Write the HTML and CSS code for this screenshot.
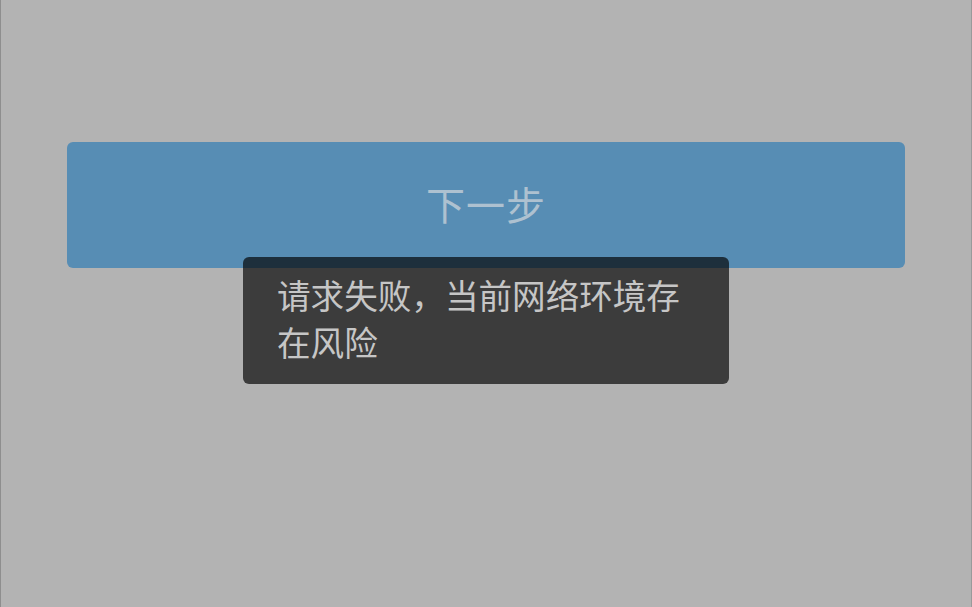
FILE: index.html
```html
<!DOCTYPE html>
<html lang="zh-CN">
<head>
<meta charset="utf-8">
<title>下一步</title>
<link rel="stylesheet" href="styles.css">
</head>
<body>
<div class="screen">
  <button class="next-btn" type="button">下一步</button>
  <div class="toast">请求失败，当前网络环境存在风险</div>
</div>
</body>
</html>
```
FILE: styles.css
```css
html, body {
  margin: 0;
  padding: 0;
  background: #b3b3b3;
}
.screen {
  position: relative;
  box-sizing: border-box;
  width: 972px;
  height: 607px;
  padding: 142px 66px 0 66px;
  background: #b3b3b3;
  border-left: 1px solid #8e8e8e;
  border-right: 1px solid #9a9a9a;
  font-family: "Noto Sans CJK SC", "Noto Sans", sans-serif;
  overflow: hidden;
}
.next-btn {
  display: flex;
  align-items: center;
  justify-content: center;
  width: 100%;
  height: 126px;
  margin: 0;
  padding: 0 0 5px 0;
  border: none;
  border-radius: 6px;
  background: #578db4;
  color: #aec1d0;
  font-family: "Noto Sans CJK SC", "Noto Sans", sans-serif;
  font-size: 39px;
  letter-spacing: 1px;
}
.toast {
  position: absolute;
  left: 242px;
  top: 257px;
  box-sizing: border-box;
  width: 486px;
  height: 127px;
  padding: 14px 30px 0 34px;
  border-radius: 6px;
  background: rgba(0, 0, 0, 0.665);
  color: #c6c6c6;
  font-size: 33.6px;
  line-height: 47px;
}
```
